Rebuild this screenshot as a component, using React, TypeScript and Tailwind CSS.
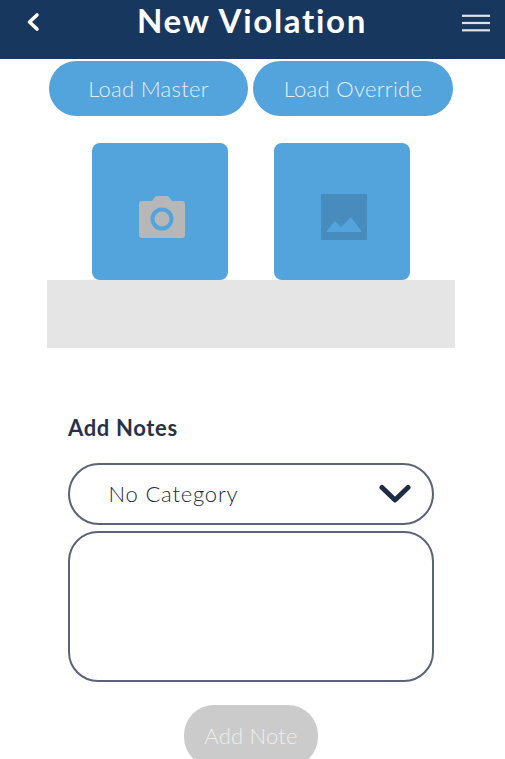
export default function App() {
  return (
    <div className="w-[505px] h-[759px] overflow-hidden bg-white font-['Lato','Noto_Sans',sans-serif]">
      <header className="h-[59px] bg-[#18375f] flex items-start justify-between pl-[25px] pr-[15px] text-white">
        <svg width="16" height="20" viewBox="0 0 16 20" className="mt-[12px]" fill="none">
          <path d="M12 3 L4.5 10 L12 17" stroke="#fff" strokeWidth="3.6" strokeLinecap="round" strokeLinejoin="round" />
        </svg>
        <h1 className="text-[33px] leading-[40px] font-bold tracking-[1.7px] ml-[1px]">New Violation</h1>
        <svg width="28" height="18" viewBox="0 0 28 18" className="mt-[14px]">
          <rect x="0" y="0.7" width="28" height="2.2" fill="#dfe3e9" />
          <rect x="0" y="7.9" width="28" height="2.2" fill="#dfe3e9" />
          <rect x="0" y="15.2" width="28" height="2.2" fill="#dfe3e9" />
        </svg>
      </header>

      <div className="flex justify-start gap-[5px] pl-[49px] pt-[2px]">
        <div className="w-[199px] h-[55px] rounded-full bg-[#53a3dc] text-[#e3f0fa] text-[22px] font-light tracking-[0.3px] flex items-center justify-center">Load Master</div>
        <div className="w-[200px] h-[55px] rounded-full bg-[#53a3dc] text-[#e3f0fa] text-[22px] font-light tracking-[0.3px] flex items-center justify-center">Load Override</div>
      </div>

      <div className="flex gap-[45.3px] pl-[91.7px] pt-[27px]">
        <div className="w-[136.7px] h-[137px] rounded-[8px] bg-[#53a3dc] flex items-center justify-center pt-[10px] pl-[4px]">
          <svg width="46" height="42" viewBox="0 0 46 42">
            <path d="M3 5 H13 L15.5 1.5 Q16.5 0 18 0 H28 Q29.5 0 30.5 1.5 L33 5 H43 Q46 5 46 8 V39 Q46 42 43 42 H3 Q0 42 0 39 V8 Q0 5 3 5 Z" fill="#b7b7b7" />
            <circle cx="23" cy="23" r="9.5" fill="none" stroke="#53a3dc" strokeWidth="4" />
          </svg>
        </div>
        <div className="w-[136.7px] h-[137px] rounded-[8px] bg-[#53a3dc] flex items-center justify-center pt-[10px] pl-[4px]">
          <svg width="46" height="46" viewBox="0 0 46 46">
            <rect width="46" height="46" fill="#488cbd" />
            <path d="M5 38 L14 27 L20 33 L30 23 L41 38 Z" fill="#53a3dc" />
          </svg>
        </div>
      </div>

      <div className="ml-[47px] w-[408px] h-[68px] bg-[#e5e5e5]" />

      <h2 className="ml-[68px] mt-[68px] text-[22px] leading-[24px] font-bold text-[#27324a] tracking-[0.65px]">Add Notes</h2>

      <div className="ml-[68px] mt-[23px] w-[366px] h-[62px] rounded-full border-2 border-[#5a6378] flex items-center justify-between pl-[38.5px] pr-[21px] pb-[2px]">
        <span className="text-[22px] font-light text-[#1f2839] tracking-[0.8px]">No Category</span>
        <svg width="32" height="20" viewBox="0 0 32 20" fill="none" className="mt-[2px]">
          <path d="M3 3.5 L16 16 L29 3.5" stroke="#1f2c45" strokeWidth="5" strokeLinecap="round" strokeLinejoin="round" />
        </svg>
      </div>

      <div className="ml-[68px] mt-[6px] w-[366px] h-[151px] rounded-[30px] border-2 border-[#5a6378]" />

      <div className="ml-[184px] mt-[23px] w-[134px] h-[62px] rounded-[30px] bg-[#cbcbcb] text-[#eeeeee] text-[22px] font-light tracking-[0.2px] flex items-center justify-center pb-[2px]">Add Note</div>
    </div>
  );
}
